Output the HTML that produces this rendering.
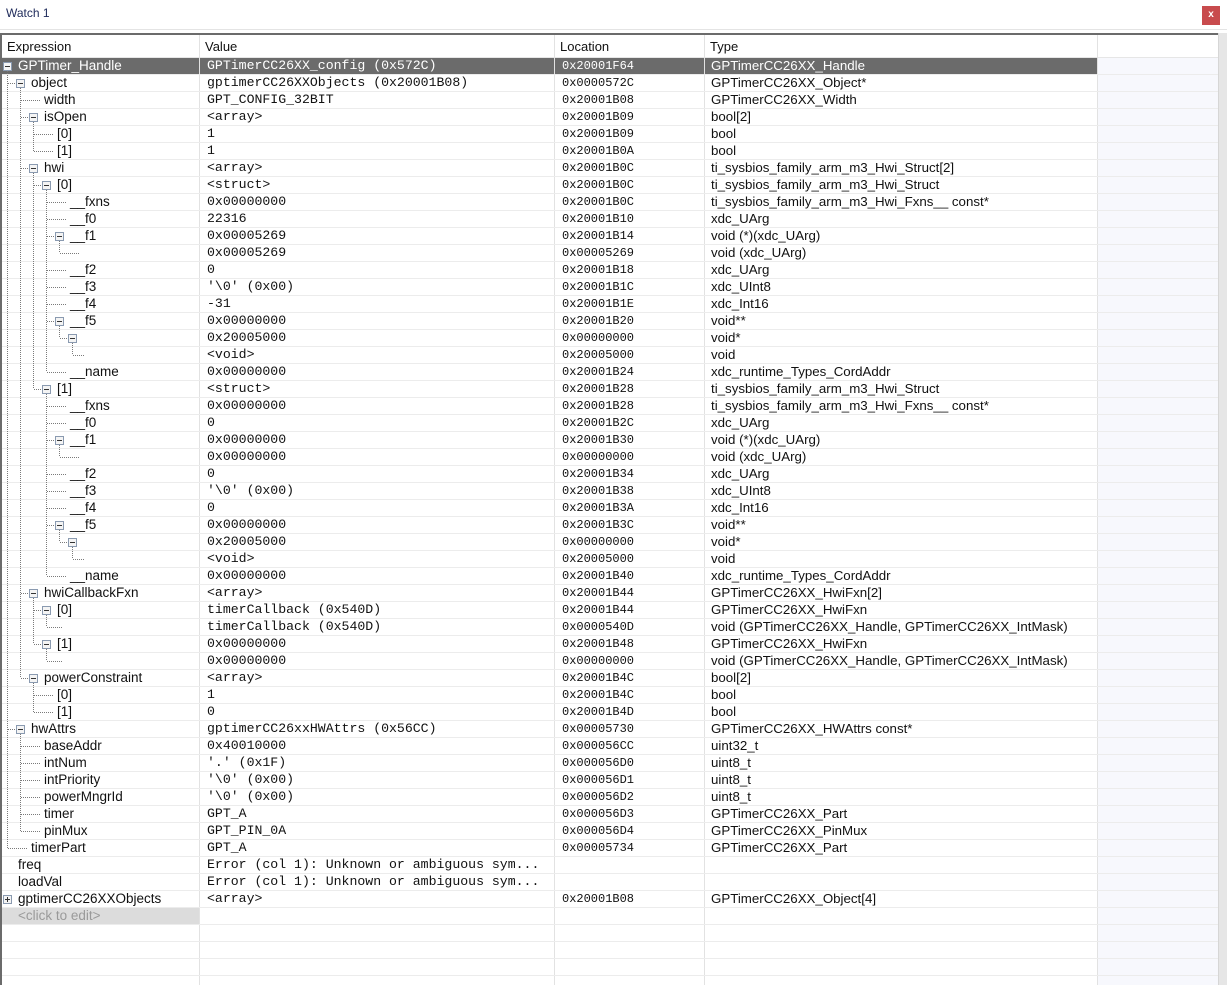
<!DOCTYPE html>
<html><head><meta charset="utf-8">
<style>
*{margin:0;padding:0;box-sizing:border-box}
body{width:1227px;height:985px;overflow:hidden;background:#fff;font-family:"Liberation Sans",sans-serif;position:relative}
#title{position:absolute;left:0;top:0;width:1227px;height:30px;background:#fff;border-bottom:1px solid #e4e4e4}
#title span{position:absolute;left:6px;top:6px;font-size:12px;color:#1e2a5a}
#close{position:absolute;left:1202px;top:6px;width:18px;height:19px;background:#c84b4d;color:#fff;font-size:10px;font-weight:bold;text-align:center;line-height:18px}
#grid{position:absolute;left:0;top:33px;width:1218px;height:952px;border-top:2px solid #6b6b6b;border-left:2px solid #6b6b6b;overflow:hidden}
#sb{position:absolute;left:1218px;top:33px;width:9px;height:952px;background:#e6e6e6;border-left:1px solid #d6d6d6}
.h{position:absolute;left:0;top:0;height:23px;width:1216px;background:#fff;border-bottom:1px solid #e6e6e6}
.h div{position:absolute;top:0;height:23px;border-right:1px solid #e2e2e2;font-size:13px;padding:4px 0 0 5px;color:#111}
.rows{position:absolute;left:0;top:23px;width:1216px}
.r{position:relative;height:17px;border-bottom:1px solid #ececec;font-size:13px;color:#111;white-space:nowrap}
.r>*{position:absolute;top:0;height:16px;line-height:16px;font-style:normal;font-weight:normal;text-decoration:none;overflow:hidden}
.r i{left:0;width:198px;border-right:1px solid #e2e2e2;font-size:13.5px}
.r i em{position:absolute;top:0;font-style:normal}
.r b{left:198px;width:355px;border-right:1px solid #e2e2e2;padding-left:7px;font-family:"Liberation Mono",monospace;font-size:13.2px}
.r u{left:553px;width:150px;border-right:1px solid #e2e2e2;padding-left:7px;font-family:"Liberation Mono",monospace;font-size:12px}
.r s{left:703px;width:393px;border-right:1px solid #e2e2e2;padding-left:6px;font-size:13.3px}
.r kbd{left:1096px;width:120px;background:#f7f8fd}
.sel i,.sel b,.sel u,.sel s{background:#6b6b6b;color:#fff}
.ed i{background:#dcdcdc;color:#9a9a9a}
svg{position:absolute;left:0;top:0}
</style></head><body>
<div id="title"><span>Watch 1</span></div>
<div id="close">x</div>
<div id="sb"></div>
<div id="grid">
<div class="h"><div style="left:0;width:198px">Expression</div><div style="left:198px;width:355px">Value</div><div style="left:553px;width:150px">Location</div><div style="left:703px;width:393px">Type</div><div style="left:1096px;width:120px;border:none"></div></div>
<div class="rows">
<div class="r sel"><i><em style="left:16px">GPTimer_Handle</em></i><b>GPTimerCC26XX_config (0x572C)</b><u>0x20001F64</u><s>GPTimerCC26XX_Handle</s><kbd></kbd></div>
<div class="r"><i><em style="left:29px">object</em></i><b>gptimerCC26XXObjects (0x20001B08)</b><u>0x0000572C</u><s>GPTimerCC26XX_Object*</s><kbd></kbd></div>
<div class="r"><i><em style="left:42px">width</em></i><b>GPT_CONFIG_32BIT</b><u>0x20001B08</u><s>GPTimerCC26XX_Width</s><kbd></kbd></div>
<div class="r"><i><em style="left:42px">isOpen</em></i><b>&lt;array&gt;</b><u>0x20001B09</u><s>bool[2]</s><kbd></kbd></div>
<div class="r"><i><em style="left:55px">[0]</em></i><b>1</b><u>0x20001B09</u><s>bool</s><kbd></kbd></div>
<div class="r"><i><em style="left:55px">[1]</em></i><b>1</b><u>0x20001B0A</u><s>bool</s><kbd></kbd></div>
<div class="r"><i><em style="left:42px">hwi</em></i><b>&lt;array&gt;</b><u>0x20001B0C</u><s>ti_sysbios_family_arm_m3_Hwi_Struct[2]</s><kbd></kbd></div>
<div class="r"><i><em style="left:55px">[0]</em></i><b>&lt;struct&gt;</b><u>0x20001B0C</u><s>ti_sysbios_family_arm_m3_Hwi_Struct</s><kbd></kbd></div>
<div class="r"><i><em style="left:68px">__fxns</em></i><b>0x00000000</b><u>0x20001B0C</u><s>ti_sysbios_family_arm_m3_Hwi_Fxns__ const*</s><kbd></kbd></div>
<div class="r"><i><em style="left:68px">__f0</em></i><b>22316</b><u>0x20001B10</u><s>xdc_UArg</s><kbd></kbd></div>
<div class="r"><i><em style="left:68px">__f1</em></i><b>0x00005269</b><u>0x20001B14</u><s>void (*)(xdc_UArg)</s><kbd></kbd></div>
<div class="r"><i></i><b>0x00005269</b><u>0x00005269</u><s>void (xdc_UArg)</s><kbd></kbd></div>
<div class="r"><i><em style="left:68px">__f2</em></i><b>0</b><u>0x20001B18</u><s>xdc_UArg</s><kbd></kbd></div>
<div class="r"><i><em style="left:68px">__f3</em></i><b>'\0' (0x00)</b><u>0x20001B1C</u><s>xdc_UInt8</s><kbd></kbd></div>
<div class="r"><i><em style="left:68px">__f4</em></i><b>-31</b><u>0x20001B1E</u><s>xdc_Int16</s><kbd></kbd></div>
<div class="r"><i><em style="left:68px">__f5</em></i><b>0x00000000</b><u>0x20001B20</u><s>void**</s><kbd></kbd></div>
<div class="r"><i></i><b>0x20005000</b><u>0x00000000</u><s>void*</s><kbd></kbd></div>
<div class="r"><i></i><b>&lt;void&gt;</b><u>0x20005000</u><s>void</s><kbd></kbd></div>
<div class="r"><i><em style="left:68px">__name</em></i><b>0x00000000</b><u>0x20001B24</u><s>xdc_runtime_Types_CordAddr</s><kbd></kbd></div>
<div class="r"><i><em style="left:55px">[1]</em></i><b>&lt;struct&gt;</b><u>0x20001B28</u><s>ti_sysbios_family_arm_m3_Hwi_Struct</s><kbd></kbd></div>
<div class="r"><i><em style="left:68px">__fxns</em></i><b>0x00000000</b><u>0x20001B28</u><s>ti_sysbios_family_arm_m3_Hwi_Fxns__ const*</s><kbd></kbd></div>
<div class="r"><i><em style="left:68px">__f0</em></i><b>0</b><u>0x20001B2C</u><s>xdc_UArg</s><kbd></kbd></div>
<div class="r"><i><em style="left:68px">__f1</em></i><b>0x00000000</b><u>0x20001B30</u><s>void (*)(xdc_UArg)</s><kbd></kbd></div>
<div class="r"><i></i><b>0x00000000</b><u>0x00000000</u><s>void (xdc_UArg)</s><kbd></kbd></div>
<div class="r"><i><em style="left:68px">__f2</em></i><b>0</b><u>0x20001B34</u><s>xdc_UArg</s><kbd></kbd></div>
<div class="r"><i><em style="left:68px">__f3</em></i><b>'\0' (0x00)</b><u>0x20001B38</u><s>xdc_UInt8</s><kbd></kbd></div>
<div class="r"><i><em style="left:68px">__f4</em></i><b>0</b><u>0x20001B3A</u><s>xdc_Int16</s><kbd></kbd></div>
<div class="r"><i><em style="left:68px">__f5</em></i><b>0x00000000</b><u>0x20001B3C</u><s>void**</s><kbd></kbd></div>
<div class="r"><i></i><b>0x20005000</b><u>0x00000000</u><s>void*</s><kbd></kbd></div>
<div class="r"><i></i><b>&lt;void&gt;</b><u>0x20005000</u><s>void</s><kbd></kbd></div>
<div class="r"><i><em style="left:68px">__name</em></i><b>0x00000000</b><u>0x20001B40</u><s>xdc_runtime_Types_CordAddr</s><kbd></kbd></div>
<div class="r"><i><em style="left:42px">hwiCallbackFxn</em></i><b>&lt;array&gt;</b><u>0x20001B44</u><s>GPTimerCC26XX_HwiFxn[2]</s><kbd></kbd></div>
<div class="r"><i><em style="left:55px">[0]</em></i><b>timerCallback (0x540D)</b><u>0x20001B44</u><s>GPTimerCC26XX_HwiFxn</s><kbd></kbd></div>
<div class="r"><i></i><b>timerCallback (0x540D)</b><u>0x0000540D</u><s>void (GPTimerCC26XX_Handle, GPTimerCC26XX_IntMask)</s><kbd></kbd></div>
<div class="r"><i><em style="left:55px">[1]</em></i><b>0x00000000</b><u>0x20001B48</u><s>GPTimerCC26XX_HwiFxn</s><kbd></kbd></div>
<div class="r"><i></i><b>0x00000000</b><u>0x00000000</u><s>void (GPTimerCC26XX_Handle, GPTimerCC26XX_IntMask)</s><kbd></kbd></div>
<div class="r"><i><em style="left:42px">powerConstraint</em></i><b>&lt;array&gt;</b><u>0x20001B4C</u><s>bool[2]</s><kbd></kbd></div>
<div class="r"><i><em style="left:55px">[0]</em></i><b>1</b><u>0x20001B4C</u><s>bool</s><kbd></kbd></div>
<div class="r"><i><em style="left:55px">[1]</em></i><b>0</b><u>0x20001B4D</u><s>bool</s><kbd></kbd></div>
<div class="r"><i><em style="left:29px">hwAttrs</em></i><b>gptimerCC26xxHWAttrs (0x56CC)</b><u>0x00005730</u><s>GPTimerCC26XX_HWAttrs const*</s><kbd></kbd></div>
<div class="r"><i><em style="left:42px">baseAddr</em></i><b>0x40010000</b><u>0x000056CC</u><s>uint32_t</s><kbd></kbd></div>
<div class="r"><i><em style="left:42px">intNum</em></i><b>'.' (0x1F)</b><u>0x000056D0</u><s>uint8_t</s><kbd></kbd></div>
<div class="r"><i><em style="left:42px">intPriority</em></i><b>'\0' (0x00)</b><u>0x000056D1</u><s>uint8_t</s><kbd></kbd></div>
<div class="r"><i><em style="left:42px">powerMngrId</em></i><b>'\0' (0x00)</b><u>0x000056D2</u><s>uint8_t</s><kbd></kbd></div>
<div class="r"><i><em style="left:42px">timer</em></i><b>GPT_A</b><u>0x000056D3</u><s>GPTimerCC26XX_Part</s><kbd></kbd></div>
<div class="r"><i><em style="left:42px">pinMux</em></i><b>GPT_PIN_0A</b><u>0x000056D4</u><s>GPTimerCC26XX_PinMux</s><kbd></kbd></div>
<div class="r"><i><em style="left:29px">timerPart</em></i><b>GPT_A</b><u>0x00005734</u><s>GPTimerCC26XX_Part</s><kbd></kbd></div>
<div class="r"><i><em style="left:16px">freq</em></i><b>Error (col 1): Unknown or ambiguous sym...</b><u></u><s></s><kbd></kbd></div>
<div class="r"><i><em style="left:16px">loadVal</em></i><b>Error (col 1): Unknown or ambiguous sym...</b><u></u><s></s><kbd></kbd></div>
<div class="r"><i><em style="left:16px">gptimerCC26XXObjects</em></i><b>&lt;array&gt;</b><u>0x20001B08</u><s>GPTimerCC26XX_Object[4]</s><kbd></kbd></div>
<div class="r ed"><i><em style="left:16px">&lt;click to edit&gt;</em></i><b></b><u></u><s></s><kbd></kbd></div>
<div class="r"><i></i><b></b><u></u><s></s><kbd></kbd></div>
<div class="r"><i></i><b></b><u></u><s></s><kbd></kbd></div>
<div class="r"><i></i><b></b><u></u><s></s><kbd></kbd></div>
<div class="r"><i></i><b></b><u></u><s></s><kbd></kbd></div>
</div>
</div>
<svg width="200" height="985" viewBox="0 0 200 985">
<g stroke="#7a7a7a" stroke-width="1" stroke-dasharray="1,1" fill="none" shape-rendering="crispEdges">
<path d="M7.5 71V848 M20.5 88V678 M33.5 122V151 M33.5 173V389 M46.5 190V372 M59.5 241V253 M59.5 326V338 M72.5 343V355 M46.5 394V576 M59.5 445V457 M59.5 530V542 M72.5 547V559 M33.5 598V644 M46.5 615V627 M46.5 649V661 M33.5 683V712 M20.5 734V831"/>
<path d="M8 83.5H16 M21 100.5H40 M21 117.5H29 M34 134.5H53 M34 151.5H53 M21 168.5H29 M34 185.5H42 M47 202.5H66 M47 219.5H66 M47 236.5H55 M60 253.5H79 M47 270.5H66 M47 287.5H66 M47 304.5H66 M47 321.5H55 M60 338.5H68 M73 355.5H85 M47 372.5H66 M34 389.5H42 M47 406.5H66 M47 423.5H66 M47 440.5H55 M60 457.5H79 M47 474.5H66 M47 491.5H66 M47 508.5H66 M47 525.5H55 M60 542.5H68 M73 559.5H85 M47 576.5H66 M21 593.5H29 M34 610.5H42 M47 627.5H62 M34 644.5H42 M47 661.5H62 M21 678.5H29 M34 695.5H53 M34 712.5H53 M8 729.5H16 M21 746.5H40 M21 763.5H40 M21 780.5H40 M21 797.5H40 M21 814.5H40 M21 831.5H40 M8 848.5H27"/>
</g>
<g fill="#f4f4f4" stroke="#8a9ab0" shape-rendering="crispEdges">
<rect x="3.5" y="62.5" width="8" height="8"/>
<rect x="16.5" y="79.5" width="8" height="8"/>
<rect x="29.5" y="113.5" width="8" height="8"/>
<rect x="29.5" y="164.5" width="8" height="8"/>
<rect x="42.5" y="181.5" width="8" height="8"/>
<rect x="55.5" y="232.5" width="8" height="8"/>
<rect x="55.5" y="317.5" width="8" height="8"/>
<rect x="68.5" y="334.5" width="8" height="8"/>
<rect x="42.5" y="385.5" width="8" height="8"/>
<rect x="55.5" y="436.5" width="8" height="8"/>
<rect x="55.5" y="521.5" width="8" height="8"/>
<rect x="68.5" y="538.5" width="8" height="8"/>
<rect x="29.5" y="589.5" width="8" height="8"/>
<rect x="42.5" y="606.5" width="8" height="8"/>
<rect x="42.5" y="640.5" width="8" height="8"/>
<rect x="29.5" y="674.5" width="8" height="8"/>
<rect x="16.5" y="725.5" width="8" height="8"/>
<rect x="3.5" y="895.5" width="8" height="8"/>
</g>
<g stroke="#333" shape-rendering="crispEdges">
<path d="M5 66.5h5 M18 83.5h5 M31 117.5h5 M31 168.5h5 M44 185.5h5 M57 236.5h5 M57 321.5h5 M70 338.5h5 M44 389.5h5 M57 440.5h5 M57 525.5h5 M70 542.5h5 M31 593.5h5 M44 610.5h5 M44 644.5h5 M31 678.5h5 M18 729.5h5 M5 899.5h5 M7.5 897v5"/>
</g>
</svg>
</body></html>
